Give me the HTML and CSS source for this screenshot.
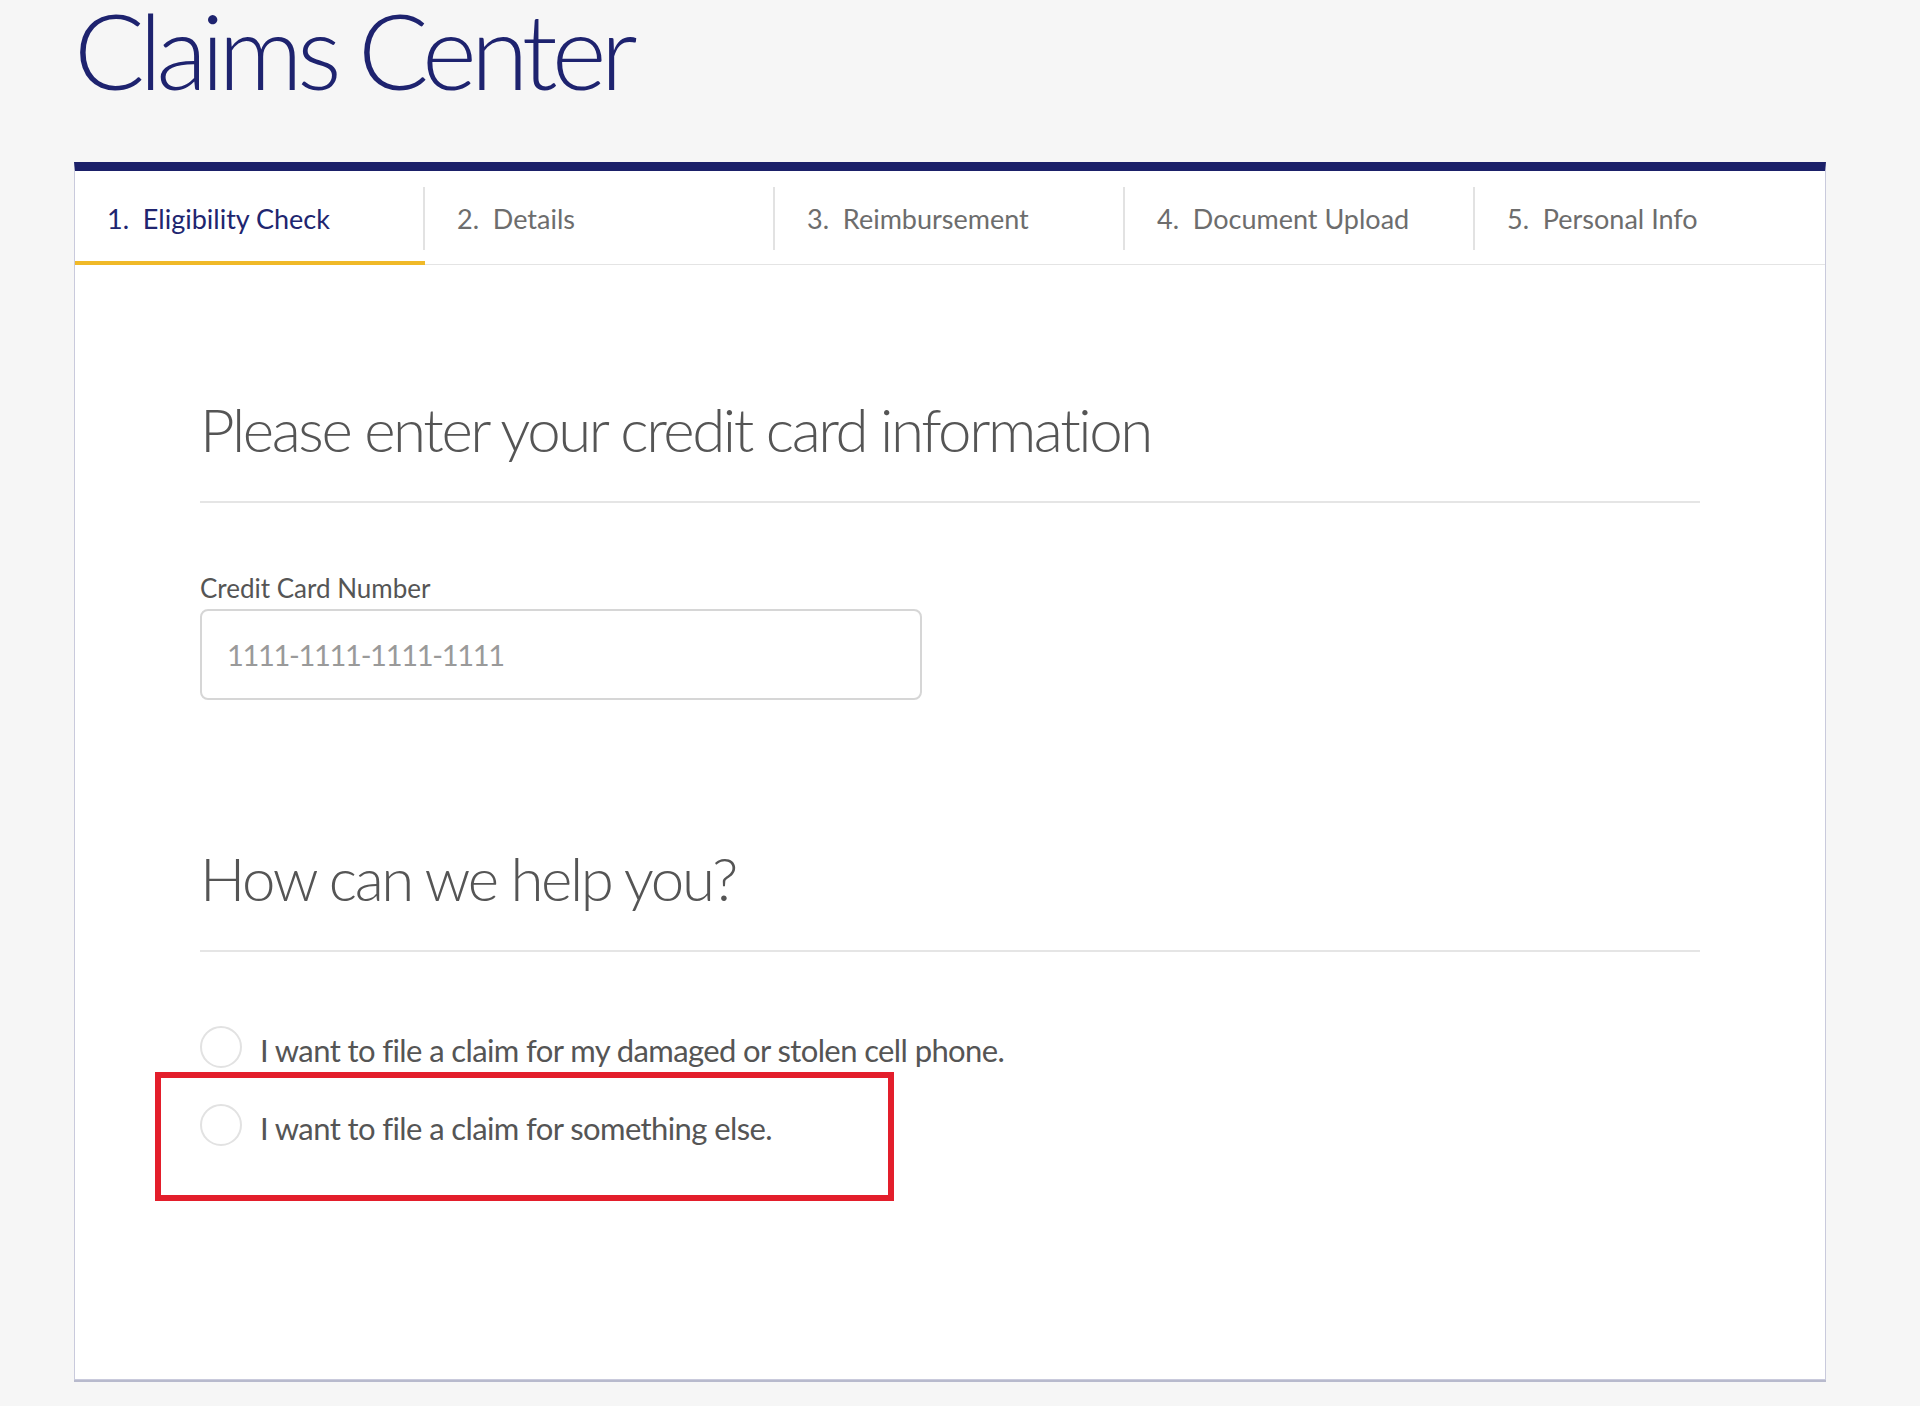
FILE: index.html
```html
<!DOCTYPE html>
<html lang="en">
<head>
<meta charset="utf-8">
<title>Claims Center</title>
<link rel="stylesheet" href="styles.css">
</head>
<body>
<div class="page">
  <h1 class="title">Claims Center</h1>
  <div class="card">
    <div class="tabs">
      <div class="tab active">1.&nbsp; Eligibility Check</div>
      <div class="tab">2.&nbsp; Details</div>
      <div class="tab">3.&nbsp; Reimbursement</div>
      <div class="tab">4.&nbsp; Document Upload</div>
      <div class="tab last">5.&nbsp; Personal Info</div>
    </div>
    <div class="content">
      <h2 class="section-title first">Please enter your credit card information</h2>
      <label class="field-label" for="cc">Credit Card Number</label>
      <input class="field-input" id="cc" type="text" placeholder="1111-1111-1111-1111">
      <h2 class="section-title second">How can we help you?</h2>
      <div class="options">
        <div class="option">
          <span class="radio"></span>
          <span class="option-text">I want to file a claim for my damaged or stolen cell phone.</span>
        </div>
        <div class="option highlighted">
          <span class="radio"></span>
          <span class="option-text">I want to file a claim for something else.</span>
          <span class="highlight-box"></span>
        </div>
      </div>
    </div>
  </div>
</div>
</body>
</html>
```
FILE: styles.css
```css
html, body {
  margin: 0;
  padding: 0;
}
body {
  background: #f6f6f6;
  font-family: Lato, "Open Sans", sans-serif;
  color: #555555;
  min-height: 1406px;
}
.page {
  margin-left: 74px;
  width: 1752px;
}
.title {
  margin: 0 0 63px 0;
  font-size: 105px;
  line-height: 99px;
  font-weight: 300;
  letter-spacing: -6px;
  color: #1e236f;
}
.card {
  background: #ffffff;
  border: 1px solid #c9cadc;
  border-top: 9px solid #1b2069;
  box-shadow: 0 2px 0 #b8bacd;
}
.tabs {
  display: flex;
}
.tab {
  flex: 1;
  position: relative;
  box-sizing: border-box;
  height: 94px;
  padding: 32px 0 0 32px;
  font-size: 27px;
  line-height: 32px;
  color: #6d6d6d;
  border-bottom: 1px solid #e4e4e4;
  white-space: nowrap;
}
.tab::after {
  content: "";
  position: absolute;
  right: 0;
  top: 16px;
  width: 2px;
  height: 63px;
  background: #e2e2e2;
}
.tab.last::after {
  display: none;
}
.tab.active {
  color: #20256f;
  border-bottom: 4px solid #f0b928;
}
.content {
  padding: 0 125px 230px 125px;
}
.section-title {
  margin: 0;
  font-size: 60px;
  line-height: 76px;
  font-weight: 300;
  letter-spacing: -2.4px;
  color: #555555;
  border-bottom: 2px solid #e5e5e5;
}
.section-title.first {
  margin-top: 126px;
  padding-bottom: 34px;
}
.section-title.second {
  margin-top: 140px;
  padding-bottom: 34px;
}
.field-label {
  display: block;
  margin-top: 71px;
  font-size: 26px;
  line-height: 29px;
  color: #555555;
}
.field-input {
  display: block;
  box-sizing: border-box;
  margin-top: 6px;
  width: 722px;
  height: 91px;
  padding: 0 0 0 25px;
  border: 2px solid #d6d6d6;
  border-radius: 8px;
  font-family: Lato, "Open Sans", sans-serif;
  font-size: 29px;
  letter-spacing: -1.3px;
  color: #555555;
  outline: none;
}
.field-input::placeholder {
  color: #9a9a9a;
}
.options {
  margin-top: 74px;
  display: flex;
  flex-direction: column;
  gap: 33px;
}
.option {
  position: relative;
  display: flex;
  align-items: flex-start;
  gap: 18px;
}
.radio {
  flex: none;
  box-sizing: border-box;
  width: 42px;
  height: 42px;
  border: 2px solid #e2e2e2;
  border-radius: 50%;
  background: #ffffff;
}
.option-text {
  margin-top: 3px;
  font-size: 31px;
  line-height: 42px;
  letter-spacing: -0.6px;
  color: #555555;
}
.highlight-box {
  position: absolute;
  left: -45px;
  top: -32px;
  width: 739px;
  height: 129px;
  box-sizing: border-box;
  border: 6px solid #e31e2b;
  pointer-events: none;
}
```
